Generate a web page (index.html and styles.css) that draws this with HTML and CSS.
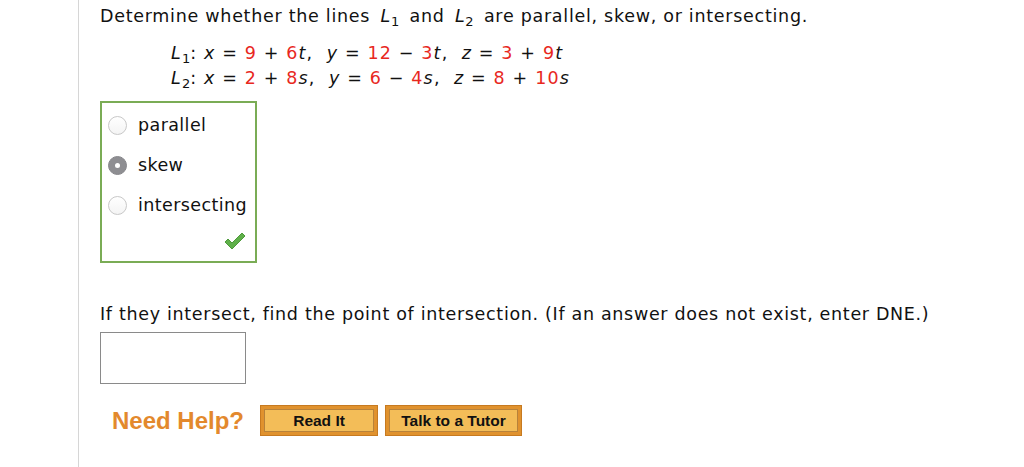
FILE: index.html
```html
<!DOCTYPE html>
<html>
<head>
<meta charset="utf-8">
<link rel="stylesheet" href="styles.css">
</head>
<body>
<div class="page">
  <div class="content">
    <p class="question">Determine whether the lines <span class="m"><i>L</i><sub>1</sub></span> and <span class="m"><i>L</i><sub>2</sub></span> are parallel, skew, or intersecting.</p>
    <div class="eqs">
      <div class="eq"><i>L</i><sub>1</sub>: <i>x</i> = <span class="r">9</span> + <span class="r">6</span><i>t</i>, &nbsp;<i>y</i> = <span class="r">12</span> &minus; <span class="r">3</span><i>t</i>, &nbsp;<i>z</i> = <span class="r">3</span> + <span class="r">9</span><i>t</i></div>
      <div class="eq"><i>L</i><sub>2</sub>: <i>x</i> = <span class="r">2</span> + <span class="r">8</span><i>s</i>, &nbsp;<i>y</i> = <span class="r">6</span> &minus; <span class="r">4</span><i>s</i>, &nbsp;<i>z</i> = <span class="r">8</span> + <span class="r">10</span><i>s</i></div>
    </div>
    <div class="choices">
      <div class="choice"><span class="radio"></span><span>parallel</span></div>
      <div class="choice"><span class="radio on"></span><span>skew</span></div>
      <div class="choice"><span class="radio"></span><span>intersecting</span></div>
      <div class="check">
        <svg width="24" height="20" viewBox="0 0 24 20"><path d="M2 11 L5 8 L9 12 L19 2 L22 5 L9 18 Z" fill="#5fb04a" stroke="#4d9a3a" stroke-width="1" stroke-linejoin="round"/></svg>
      </div>
    </div>
    <p class="question q2">If they intersect, find the point of intersection. (If an answer does not exist, enter DNE.)</p>
    <div class="answer"></div>
    <div class="help">
      <span class="need">Need Help?</span>
      <span class="btn btn1"><span>Read It</span></span>
      <span class="btn btn2"><span>Talk to a Tutor</span></span>
    </div>
  </div>
</div>
</body>
</html>
```

FILE: styles.css
```css
html, body {
  margin: 0;
  padding: 0;
  background: #fff;
}
.page {
  width: 1024px;
  height: 467px;
  overflow: hidden;
}
.content {
  margin-left: 78px;
  border-left: 1px solid #d6d6d6;
  height: 467px;
  padding-left: 21px;
  padding-top: 5px;
  box-sizing: border-box;
  font-family: "DejaVu Sans", Verdana, sans-serif;
  font-size: 17.5px;
  letter-spacing: 0.72px;
  color: #111;
}
.question {
  margin: 0;
  line-height: 22px;
}
.q2 {
  letter-spacing: 0.68px;
}
.m sub, .eq sub {
  font-size: 13px;
  vertical-align: -4px;
  line-height: 0;
  letter-spacing: 0;
}
i { font-style: italic; }
.m { padding: 0 4px; }
.eqs {
  margin-top: 14px;
  margin-left: 71px;
  letter-spacing: 1.15px;
  word-spacing: 0;
}
.eq {
  line-height: 25px;
}
.r { color: #e8281e; }
.choices {
  margin-top: 10px;
  width: 153px;
  height: 156px;
  border: 2px solid #7aac55;
  box-sizing: content-box;
  padding-top: 2px;
  position: relative;
  letter-spacing: 0.4px;
}
.choice {
  display: flex;
  align-items: center;
  gap: 11px;
  height: 40px;
  padding-left: 6px;
}
.radio {
  width: 19px;
  height: 19px;
  border: 1px solid #c8c8c8;
  border-radius: 50%;
  background: linear-gradient(#fff, #f4f4f4);
  box-sizing: border-box;
  display: inline-block;
  position: relative;
  flex: none;
}
.radio.on {
  background: #8e8e92;
  border-color: #87878b;
}
.radio.on::after {
  content: "";
  position: absolute;
  left: 6px;
  top: 6px;
  width: 5px;
  height: 5px;
  border-radius: 50%;
  background: #fff;
}
.check {
  position: absolute;
  right: 8px;
  bottom: 6px;
}
.q2 {
  margin-top: 40px;
}
.answer {
  margin-top: 7px;
  width: 146px;
  height: 52px;
  border: 1px solid #8a8a8a;
  box-sizing: border-box;
}
.help {
  display: flex;
  align-items: center;
  margin-top: 21px;
  margin-left: 12px;
  letter-spacing: 0;
}
.need {
  font-family: "Liberation Sans", Arial, sans-serif;
  font-weight: bold;
  font-size: 24px;
  color: #e3892d;
  margin-right: 16px;
}
.btn {
  display: inline-flex;
  padding: 3px;
  background: #e0922e;
  border: 1px solid #c77a20;
  box-sizing: border-box;
  height: 31px;
  margin-right: 7px;
}
.btn span {
  display: flex;
  align-items: center;
  justify-content: center;
  background: #f3bd58;
  border: 1px solid #b8823a;
  font-family: "Liberation Sans", Arial, sans-serif;
  font-weight: bold;
  font-size: 15.5px;
  color: #111;
  width: 100%;
}
.btn1 { width: 118px; }
.btn2 { width: 137px; }
```
